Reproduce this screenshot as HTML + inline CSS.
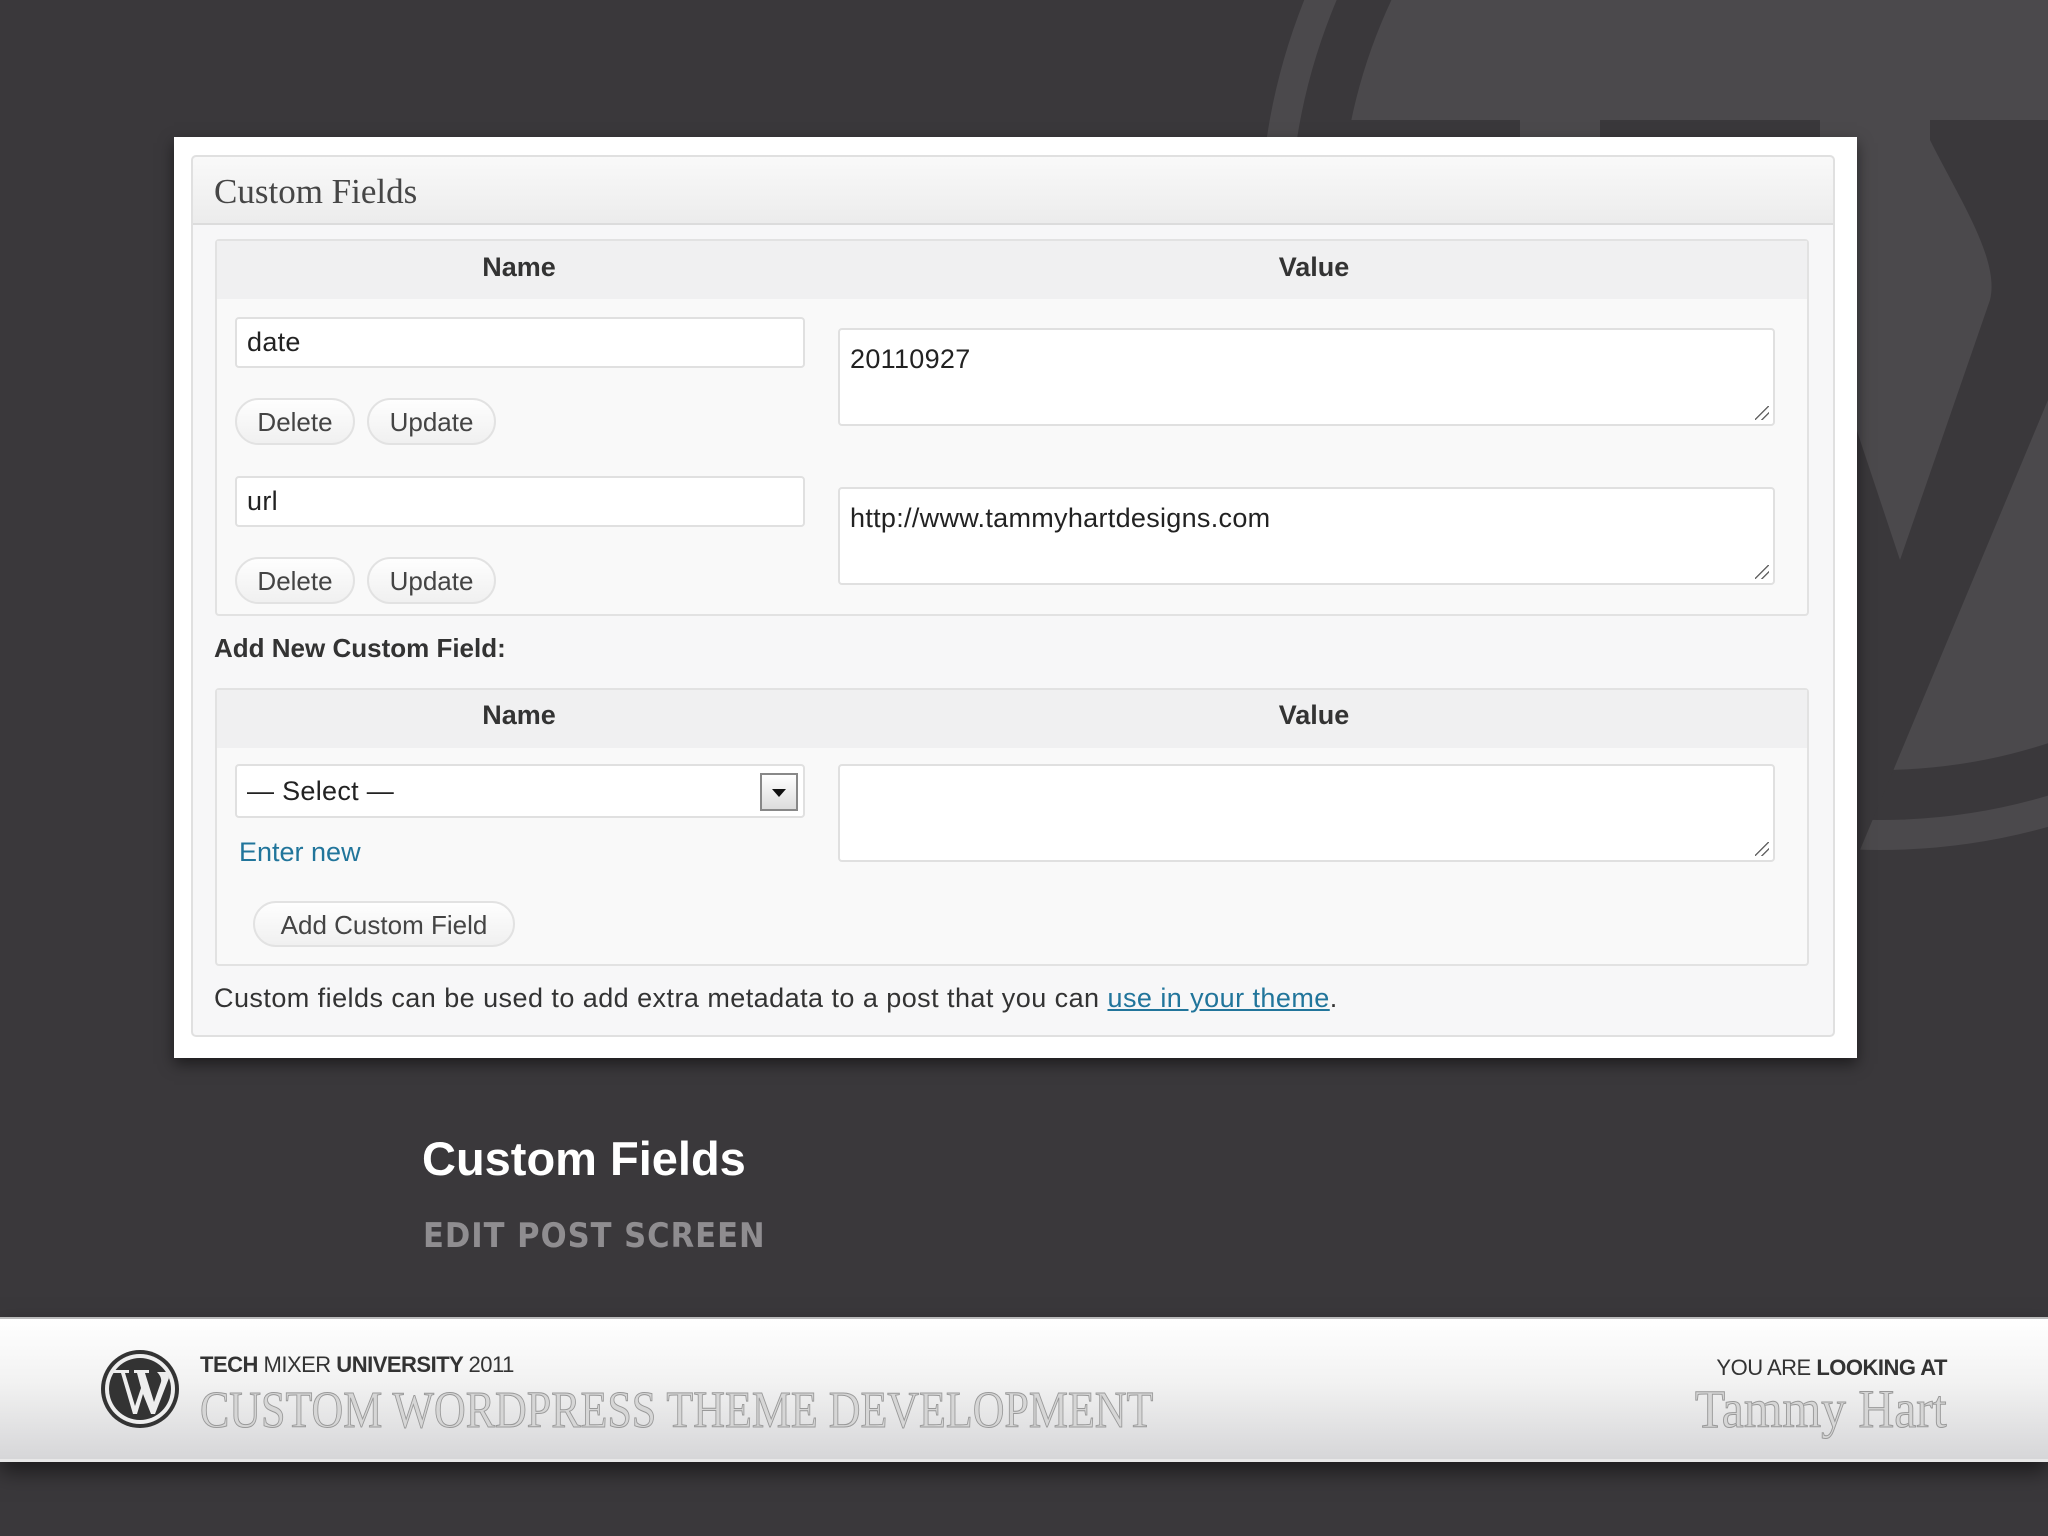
<!DOCTYPE html>
<html><head><meta charset="utf-8"><style>
*{margin:0;padding:0;box-sizing:border-box}
body{width:2048px;height:1536px;background:#3a383b;position:relative;overflow:hidden;font-family:"Liberation Sans",sans-serif}
.abs{position:absolute}
.card{left:174px;top:137px;width:1683px;height:921px;background:#fff;box-shadow:0 6px 14px rgba(0,0,0,.5)}
.box{left:191px;top:155px;width:1644px;height:882px;background:#f7f7f8;border:2px solid #e0e0e0;border-radius:5px}
.hdr{left:193px;top:157px;width:1640px;height:68px;background:linear-gradient(#f9f9f9,#ececec);border-bottom:2px solid #dcdcdc;border-radius:4px 4px 0 0}
.title{left:214px;top:172px;font-family:"Liberation Serif",serif;font-size:35px;color:#464646}
.tbl{background:#f9f9f9;border:2px solid #e2e2e2;border-radius:4px}
.th{background:#f0f0f1;height:58px}
.lab{font-weight:bold;font-size:27px;color:#333;transform:translateX(-50%)}
.inp{background:#fff;border:2px solid #e0e0e0;border-radius:4px;font-size:27px;color:#222;padding-left:10px;letter-spacing:0.3px}
.btn{background:linear-gradient(#fefefe,#f0f0f0);border:2px solid #e2e2e2;border-radius:24px;font-size:26px;color:#444;text-align:center;line-height:44px}
.grip{position:absolute;right:4px;bottom:4px;width:14px;height:14px;background:linear-gradient(135deg,transparent 45%,#666 45%,#666 52%,transparent 52%,transparent 70%,#666 70%,#666 77%,transparent 77%)}
</style></head><body>
<svg class="abs" style="left:0;top:0" width="2048" height="900">
<circle cx="1880" cy="230" r="605" fill="none" stroke="#4b494c" stroke-width="30"/>
<circle cx="1880" cy="230" r="540" fill="#4b494c"/>
<path d="M1330 120 L1520 120 L1520 140 L1480 140 L1620 600 L1700 380 L1660 140 L1600 140 L1600 120 L1820 120 L1820 140 L1760 140 L1900 560 L1990 300 C2000 260 1960 200 1930 140 L1930 120 L2048 120 L2048 400 L1860 850 L1800 850 L1700 560 L1620 820 L1560 820 L1380 140 L1330 140 Z" fill="#3a383b"/>
</svg>
<div class="abs card"></div>
<div class="abs box"></div>
<div class="abs hdr"></div>
<div class="abs title">Custom Fields</div>

<div class="abs tbl" style="left:215px;top:239px;width:1594px;height:377px"><div class="th"></div></div>
<div class="abs lab" style="left:519px;top:252px">Name</div>
<div class="abs lab" style="left:1314px;top:252px">Value</div>
<div class="abs inp" style="left:235px;top:317px;width:570px;height:51px;line-height:47px">date</div>
<div class="abs btn" style="left:235px;top:398px;width:120px;height:47px">Delete</div>
<div class="abs btn" style="left:367px;top:398px;width:129px;height:47px">Update</div>
<div class="abs inp" style="left:838px;top:328px;width:937px;height:98px;padding-top:12px;line-height:34px">20110927<div class="grip"></div></div>
<div class="abs inp" style="left:235px;top:476px;width:570px;height:51px;line-height:47px">url</div>
<div class="abs btn" style="left:235px;top:557px;width:120px;height:47px">Delete</div>
<div class="abs btn" style="left:367px;top:557px;width:129px;height:47px">Update</div>
<div class="abs inp" style="left:838px;top:487px;width:937px;height:98px;padding-top:12px;line-height:34px">http://www.tammyhartdesigns.com<div class="grip"></div></div>

<div class="abs" style="left:214px;top:633px;font-size:26px;font-weight:bold;color:#333">Add New Custom Field:</div>

<div class="abs tbl" style="left:215px;top:688px;width:1594px;height:278px"><div class="th"></div></div>
<div class="abs lab" style="left:519px;top:700px">Name</div>
<div class="abs lab" style="left:1314px;top:700px">Value</div>
<div class="abs inp" style="left:235px;top:764px;width:570px;height:54px;line-height:50px">— Select —
<div style="position:absolute;right:5px;top:7px;width:38px;height:38px;border:2px solid #888;background:linear-gradient(#fff,#ddd)"><div style="margin:14px auto 0;width:0;height:0;border-left:7px solid transparent;border-right:7px solid transparent;border-top:8px solid #111"></div></div></div>
<div class="abs" style="left:239px;top:837px;font-size:27px;color:#21759b">Enter new</div>
<div class="abs btn" style="left:253px;top:901px;width:262px;height:46px">Add Custom Field</div>
<div class="abs inp" style="left:838px;top:764px;width:937px;height:98px"><div class="grip"></div></div>

<div class="abs" style="left:214px;top:983px;font-size:27px;color:#333;letter-spacing:0.45px">Custom fields can be used to add extra metadata to a post that you can <span style="color:#21759b;text-decoration:underline">use in your theme</span>.</div>

<div class="abs" style="left:422px;top:1131px;font-size:47px;font-weight:bold;color:#fff">Custom Fields</div>
<div class="abs" style="left:423px;top:1216px;font-size:34px;font-weight:bold;color:#8f8d90;letter-spacing:1px;font-family:'DejaVu Sans Condensed',sans-serif">EDIT POST SCREEN</div>

<div class="abs" style="left:0;top:1317px;width:2048px;height:145px;background:linear-gradient(#fff,#f2f2f2 45%,#d6d6d8);border-top:2px solid #bbb;border-bottom:3px solid #e8e8e8;box-shadow:0 10px 20px rgba(0,0,0,.5)"></div>
<svg class="abs" style="left:99px;top:1348px" width="82" height="82" viewBox="0 0 82 82">
<circle cx="41" cy="41" r="39" fill="#333"/><circle cx="41" cy="41" r="35" fill="#eee"/><circle cx="41" cy="41" r="31" fill="#333"/>
<path d="M14 22 L30 22 L30 25 L26 25 L36 58 L42 40 L38 25 L35 25 L35 22 L50 22 L50 25 L46 25 L55 54 L62 34 C63 30 60 26 58 24 L68 24 L70 30 L56 66 L52 66 L44 46 L38 66 L34 66 L22 25 L14 25 Z" fill="#eee"/>
</svg>
<div class="abs" style="left:200px;top:1352px;font-size:22px;color:#333;font-weight:bold;letter-spacing:-0.5px">TECH <span style="font-weight:normal">MIXER</span> UNIVERSITY <span style="font-weight:normal">2011</span></div>
<div class="abs" style="left:200px;top:1381px;font-family:'Liberation Serif',serif;font-size:52px;color:#d6d6d6;-webkit-text-stroke:1px #999;transform:scaleX(.845);transform-origin:left;white-space:nowrap">CUSTOM WORDPRESS THEME DEVELOPMENT</div>
<div class="abs" style="right:101px;top:1355px;font-size:22px;color:#333;letter-spacing:-0.5px">YOU ARE <b>LOOKING AT</b></div>
<div class="abs" style="right:101px;top:1378px;font-family:'Liberation Serif',serif;font-size:54px;color:#d6d6d6;-webkit-text-stroke:1px #999;transform:scaleX(.92);transform-origin:right;white-space:nowrap">Tammy Hart</div>
</body></html>
